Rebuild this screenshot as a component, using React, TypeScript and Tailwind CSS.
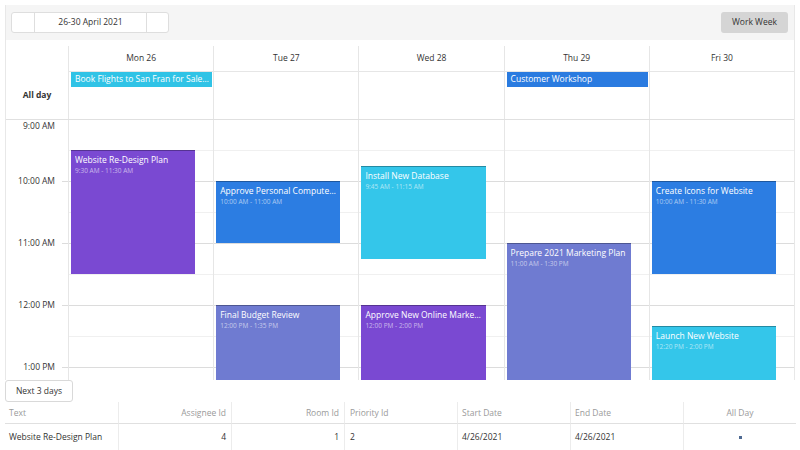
import React from 'react';

type Ev = { title: string; time: string; start: number; dur: number; color: string };
type Day = { label: string; allDay?: { title: string; color: string }; events: Ev[] };

const PURPLE = 'bg-[#7a49d2]';
const BLUE = 'bg-[#2c7de2]';
const CYAN = 'bg-[#34c6ea]';
const PERI = 'bg-[#6f7bd1]';

const days: Day[] = [
  {
    label: 'Mon 26',
    allDay: { title: 'Book Flights to San Fran for Sales Trip', color: 'bg-[#30c3e6]' },
    events: [{ title: 'Website Re-Design Plan', time: '9:30 AM - 11:30 AM', start: 30, dur: 120, color: PURPLE }],
  },
  {
    label: 'Tue 27',
    events: [
      { title: 'Approve Personal Computer Upgrade Plan', time: '10:00 AM - 11:00 AM', start: 60, dur: 60, color: BLUE },
      { title: 'Final Budget Review', time: '12:00 PM - 1:35 PM', start: 180, dur: 95, color: PERI },
    ],
  },
  {
    label: 'Wed 28',
    events: [
      { title: 'Install New Database', time: '9:45 AM - 11:15 AM', start: 45, dur: 90, color: CYAN },
      { title: 'Approve New Online Marketing Strategy', time: '12:00 PM - 2:00 PM', start: 180, dur: 120, color: PURPLE },
    ],
  },
  {
    label: 'Thu 29',
    allDay: { title: 'Customer Workshop', color: 'bg-[#2a7be0]' },
    events: [{ title: 'Prepare 2021 Marketing Plan', time: '11:00 AM - 1:30 PM', start: 120, dur: 150, color: PERI }],
  },
  {
    label: 'Fri 30',
    events: [
      { title: 'Create Icons for Website', time: '10:00 AM - 11:30 AM', start: 60, dur: 90, color: BLUE },
      { title: 'Launch New Website', time: '12:20 PM - 2:00 PM', start: 200, dur: 100, color: CYAN },
    ],
  },
];

const hourLabels = ['10:00 AM', '11:00 AM', '12:00 PM', '1:00 PM', '2:00 PM'];
const halfRows = [0, 1, 2, 3, 4, 5, 6, 7, 8];

function EventBox({ ev }: { ev: Ev }) {
  const top = (ev.start * 62) / 60 - 1;
  const height = (ev.dur * 62) / 60;
  return (
    <div
      className={`absolute left-[2px] right-[18px] ${ev.color} border-t border-black/30 pl-[4px] pr-[3px] pt-[3px] overflow-hidden`}
      style={{ top, height }}
    >
      <div className="truncate text-[8.5px] leading-[12px] text-white">{ev.title}</div>
      <div className="truncate text-[6.5px] leading-[9px] text-white/60">{ev.time}</div>
    </div>
  );
}

export default function App() {
  return (
    <div className="w-[800px] h-[450px] overflow-hidden bg-white font-['Open_Sans',sans-serif] text-[#333]">
      <div className="ml-[5px] mt-[5px] w-[790px] border-x border-[#e8e8e8]">
        {/* Toolbar */}
        <div className="h-[35px] bg-[#f5f5f5] flex items-center justify-between pl-[5px] pr-[6px]">
          <div className="flex h-[21px] bg-white border border-[#dedede] rounded-[3px]">
            <div className="w-[22px]" />
            <div className="w-[113px] border-x border-[#dedede] flex items-center justify-center text-[8.5px]">
              26-30 April 2021
            </div>
            <div className="w-[21px]" />
          </div>
          <div className="w-[67px] h-[21px] bg-[#d5d5d5] rounded-[3px] flex items-center justify-center text-[8.5px]">
            Work Week
          </div>
        </div>

        {/* Day header */}
        <div className="flex h-[31px]">
          <div className="w-[62px] shrink-0" />
          {days.map((d) => (
            <div
              key={d.label}
              className="flex-1 min-w-0 mt-[6px] h-[25px] border-l border-[#e6e6e6] flex items-center justify-center text-[8.5px]"
            >
              {d.label}
            </div>
          ))}
        </div>

        {/* All day row */}
        <div className="flex h-[49px] border-b border-[#e0e0e0]">
          <div className="w-[62px] shrink-0 flex items-center justify-center text-[8.5px] font-bold">All day</div>
          {days.map((d) => (
            <div key={d.label} className="flex-1 min-w-0 border-t border-l border-[#e6e6e6] pl-[2px] pr-[1px]">
              {d.allDay && (
                <div className={`${d.allDay.color} h-[15px] pl-[4px] pr-[3px] text-[8.5px] leading-[14px] text-white truncate`}>
                  {d.allDay.title}
                </div>
              )}
            </div>
          ))}
        </div>

        {/* Time grid */}
        <div className="flex h-[260px] overflow-hidden">
          <div className="w-[62px] shrink-0 flex flex-col">
            {hourLabels.map((h, k) => (
              <div key={h} className="h-[62px] shrink-0 flex">
                <div className="flex-1 flex flex-col justify-between items-end pr-[7px] text-[8.5px] leading-[12px]">
                  {k === 0 ? <span>9:00 AM</span> : <span />}
                  <span className="translate-y-[5px]">{h}</span>
                </div>
                <div className="w-[6px] border-b border-[#dcdcdc]" />
              </div>
            ))}
          </div>
          {days.map((d) => (
            <div key={d.label} className="flex-1 min-w-0 relative border-l border-[#e6e6e6]">
              {halfRows.map((i) => (
                <div
                  key={i}
                  className={`h-[31px] border-b ${i % 2 === 1 ? 'border-[#dcdcdc]' : 'border-[#f0f0f0]'}`}
                />
              ))}
              {d.events.map((ev) => (
                <EventBox key={ev.title} ev={ev} />
              ))}
            </div>
          ))}
        </div>
      </div>

      {/* Next 3 days */}
      <div className="ml-[5px] w-[68px] h-[22px] border border-[#d9d9d9] rounded-[3px] flex items-center justify-center text-[8.5px]">
        Next 3 days
      </div>

      {/* Table */}
      <div className="ml-[5px] grid grid-cols-[repeat(7,113px)] text-[8.5px] leading-[12px]">
        {[
          { t: 'Text', a: 'pl-[4px]' },
          { t: 'Assignee Id', a: 'justify-end pr-[5px]' },
          { t: 'Room Id', a: 'justify-end pr-[5px]' },
          { t: 'Priority Id', a: 'pl-[5px]' },
          { t: 'Start Date', a: 'pl-[4px]' },
          { t: 'End Date', a: 'pl-[4px]' },
          { t: 'All Day', a: 'justify-center' },
        ].map((c, i) => (
          <div
            key={c.t}
            className={`h-[22px] flex items-center border-b border-[#e0e0e0] text-[#9a9a9a] ${c.a} ${i > 0 ? 'border-l border-l-[#ececec]' : ''}`}
          >
            {c.t}
          </div>
        ))}
        <div className="h-[26px] flex items-center pl-[4px]">Website Re-Design Plan</div>
        <div className="h-[26px] flex items-center justify-end pr-[5px] border-l border-[#ececec]">4</div>
        <div className="h-[26px] flex items-center justify-end pr-[5px] border-l border-[#ececec]">1</div>
        <div className="h-[26px] flex items-center pl-[5px] border-l border-[#ececec]">2</div>
        <div className="h-[26px] flex items-center pl-[4px] border-l border-[#ececec]">4/26/2021</div>
        <div className="h-[26px] flex items-center pl-[4px] border-l border-[#ececec]">4/26/2021</div>
        <div className="h-[26px] flex items-center justify-center border-l border-[#ececec]">
          <div className="w-[3px] h-[3px] bg-[#4f6a92]" />
        </div>
      </div>
    </div>
  );
}
